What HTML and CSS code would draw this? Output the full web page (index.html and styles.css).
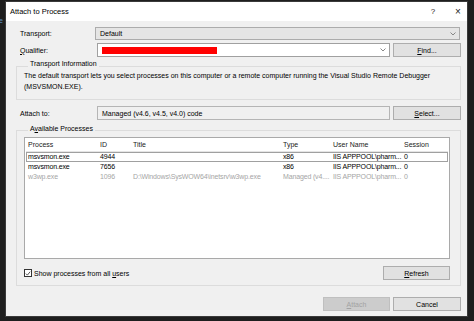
FILE: index.html
```html
<!DOCTYPE html>
<html lang="en">

<head>
    <meta charset="UTF-8">
    <meta name="viewport" content="width=device-width, initial-scale=1.0">
    <title>Attach to Process</title>
    <link rel="stylesheet" href="styles.css">
</head>
<body>
    <div class="screen">
        <div class="desk">e</div>
        <div class="window">
            <div class="titlebar">
                <span class="title">Attach to Process</span>
                <span class="tb-btn help">?</span>
                <span class="tb-btn close">×</span>
            </div>
            <div class="content">
                <div class="row row-transport">
                    <span class="label">Transport:</span>
                    <div class="combo">
                        <span>Default</span>
                        <svg class="arrow" width="6" height="4" viewBox="0 0 6 4"><path d="M0.5 0.5 L3 3 L5.5 0.5" fill="none" stroke="#7a7a7a" stroke-width="0.9"/></svg>
                    </div>
                </div>
                <div class="row row-qualifier">
                    <span class="label"><u>Q</u>ualifier:</span>
                    <div class="field input">
                        <span class="redact"></span>
                        <svg class="arrow" width="6" height="4" viewBox="0 0 6 4"><path d="M0.5 0.5 L3 3 L5.5 0.5" fill="none" stroke="#7a7a7a" stroke-width="0.9"/></svg>
                    </div>
                    <button class="btn"><u>F</u>ind...</button>
                </div>
                <fieldset class="group info">
                    <legend>Transport Information</legend>
                    <p>The default transport lets you select processes on this computer or a remote computer running the Visual Studio Remote Debugger (MSVSMON.EXE).</p>
                </fieldset>
                <div class="row row-attach">
                    <span class="label">Attach to:</span>
                    <div class="field readonly">Managed (v4.6, v4.5, v4.0) code</div>
                    <button class="btn"><u>S</u>elect...</button>
                </div>
                <fieldset class="group procs">
                    <legend>A<u>v</u>ailable Processes</legend>
                    <div class="list">
                        <div class="list-row head">
                            <span>Process</span><span>ID</span><span>Title</span><span>Type</span><span>User Name</span><span>Session</span>
                        </div>
                        <div class="list-row selected">
                            <span>msvsmon.exe</span><span>4944</span><span></span><span>x86</span><span>IIS APPPOOL\pharm...</span><span>0</span>
                        </div>
                        <div class="list-row">
                            <span>msvsmon.exe</span><span>7656</span><span></span><span>x86</span><span>IIS APPPOOL\pharm...</span><span>0</span>
                        </div>
                        <div class="list-row dim">
                            <span>w3wp.exe</span><span>1096</span><span>D:\Windows\SysWOW64\inetsrv\w3wp.exe</span><span>Managed (v4....</span><span>IIS APPPOOL\pharm...</span><span>0</span>
                        </div>
                    </div>
                    <div class="list-footer">
                        <label class="check">
                            <span class="box"><svg width="7" height="7" viewBox="0 0 7 7"><path d="M1 3.6 L2.8 5.4 L6 1.4" fill="none" stroke="#222" stroke-width="0.9"/></svg></span>
                            <span>Show processes from all <u>u</u>sers</span>
                        </label>
                        <button class="btn btn-refresh"><u>R</u>efresh</button>
                    </div>
                </fieldset>
                <div class="actions">
                    <button class="btn disabled"><u>A</u>ttach</button>
                    <button class="btn">Cancel</button>
                </div>
            </div>
        </div>
    </div>
</body>
</html>
```

FILE: styles.css
```css
body {
    margin: 0;
    background-color: #1e1e1e;
    font-family: "Liberation Sans", Arial, sans-serif;
    font-size: 7px;
    color: #000;
}
.screen {
    display: flex;
    width: 474px;
    height: 321px;
    overflow: hidden;
    padding-top: 2px;
    box-sizing: border-box;
}
.desk {
    width: 6px;
    overflow: hidden;
    color: #5b8fc7;
    padding-top: 15px;
    font-size: 7px;
    text-indent: -1px;
}
.window {
    width: 461px;
    height: 314px;
    background-color: #f0f0f0;
    box-shadow: 0 0 0 1px #3a3a3a;
    display: flex;
    flex-direction: column;
}
.titlebar {
    height: 19px;
    background-color: #fff;
    display: flex;
    align-items: center;
    padding-left: 4px;
}
.title {
    flex: 1;
    font-size: 7.5px;
}
.tb-btn {
    text-align: center;
    color: #222;
}
.help {
    width: 32px;
    font-size: 8px;
}
.close {
    width: 18px;
    font-size: 10px;
}
.content {
    padding: 0 6px 0 10px;
    display: flex;
    flex-direction: column;
}
.row {
    display: flex;
    align-items: center;
}
.label {
    width: 81px;
    padding-left: 4px;
    box-sizing: border-box;
}
.row-transport {
    margin-top: 6px;
    height: 13px;
}
.combo {
    flex: 1;
    height: 13px;
    margin-left: -2px;
    margin-right: 1px;
    box-sizing: border-box;
    border: 1px solid #acacac;
    background-color: #e5e5e5;
    display: flex;
    align-items: center;
    justify-content: space-between;
    padding: 0 3px 0 4px;
}
.row-qualifier {
    margin-top: 3px;
    height: 14px;
}
.field {
    width: 293px;
    height: 14px;
    box-sizing: border-box;
    display: flex;
    align-items: center;
    padding-left: 4px;
}
.input {
    background-color: #fff;
    border: 1px solid #a0a0a0;
    justify-content: space-between;
    padding-right: 3px;
}
.redact {
    width: 115px;
    height: 7px;
    background-color: #ff0000;
}
.readonly {
    background-color: #f0f0f0;
    border: 1px solid #b5b5b5;
}
.btn {
    width: 68px;
    height: 14px;
    margin-left: 3px;
    padding: 0;
    box-sizing: border-box;
    border: 1px solid #adadad;
    background-color: #e1e1e1;
    font-family: inherit;
    font-size: 7px;
    color: #000;
}
.btn.disabled {
    background-color: #cccccc;
    border-color: #bfbfbf;
    color: #a3a3a3;
}
.group {
    margin: 0;
    padding: 0;
    border: 1px solid #dcdcdc;
    min-width: 0;
}
.group legend {
    padding: 0 2px 4px;
    margin-left: 4px;
    line-height: 10px;
}
.info {
    margin-top: 2px;
    padding: 0 6px 7px 7px;
}
.info p {
    margin: -3px 0 0;
    line-height: 11px;
}
.row-attach {
    margin-top: 6px;
    height: 14px;
}
.procs {
    margin-top: 4px;
    padding: 0 10px 5px 7px;
}
.procs legend {
    padding-bottom: 3px;
}
.list {
    height: 122px;
    box-sizing: border-box;
    border: 1px solid #a9a9a9;
    background-color: #fff;
    padding: 0 1px;
}
.list-row {
    display: grid;
    grid-template-columns: 72px 33px 150px 50px 71px 1fr;
    height: 10px;
    line-height: 10px;
    padding-left: 2px;
    white-space: nowrap;
    overflow: hidden;
    letter-spacing: -0.15px;
}
.list-row.head {
    height: 13px;
    line-height: 13px;
    border-bottom: 1px solid #e5e5e5;
    color: #222;
    letter-spacing: 0;
}
.list-row.selected {
    outline: 1px solid #a0a0a0;
    outline-offset: -1px;
}
.list-row.dim {
    color: #a5a5a5;
}
.list-footer {
    display: flex;
    align-items: center;
    justify-content: space-between;
    margin-top: 7px;
    height: 14px;
}
.check {
    display: flex;
    align-items: center;
    gap: 2px;
}
.box {
    width: 8px;
    height: 8px;
    box-sizing: border-box;
    border: 1px solid #333;
    background-color: #fff;
    display: flex;
    align-items: center;
    justify-content: center;
}
.btn-refresh {
    width: 67px;
}
.actions {
    display: flex;
    justify-content: flex-end;
    margin-top: 11px;
}
.actions .disabled {
    width: 67px;
}
```
